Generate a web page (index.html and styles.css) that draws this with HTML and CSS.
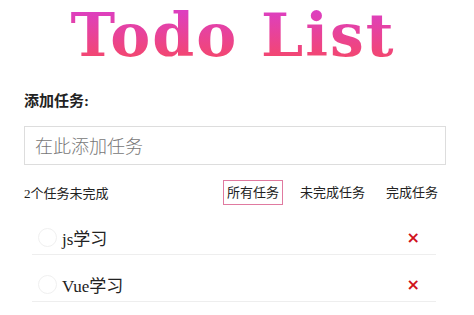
FILE: index.html
```
<!DOCTYPE html>
<html>
<head>
<meta charset="utf-8">
<link rel="stylesheet" href="styles.css">
</head>
<body>
<div class="app">
  <h1 class="title">Todo List</h1>
  <div class="label">添加任务:</div>
  <div class="input">在此添加任务</div>
  <div class="bar">
    <span class="count">2个任务未完成</span>
    <div class="filters">
      <span class="filter active">所有任务</span>
      <span class="filter">未完成任务</span>
      <span class="filter">完成任务</span>
    </div>
  </div>
  <ul class="list">
    <li class="item"><span class="check"></span><span class="text">js学习</span><span class="del">×</span></li>
    <li class="item"><span class="check"></span><span class="text">Vue学习</span><span class="del">×</span></li>
  </ul>
</div>
</body>
</html>
```
FILE: styles.css
```
html, body { margin: 0; padding: 0; background: #fff; }
body { font-family: "Liberation Serif", "Noto Sans CJK SC", serif; color: #222; }
.app { width: 422px; margin-left: 24px; }
.title {
  margin: 0;
  height: 74px;
  text-align: center;
  font-family: "DejaVu Serif", "Liberation Serif", serif;
  font-weight: bold;
  font-size: 60px;
  letter-spacing: 2px;
  line-height: 70px;
  padding-right: 4px;
  background: linear-gradient(to bottom, #dd3fc0 15%, #f4476d 80%);
  -webkit-background-clip: text;
  background-clip: text;
  color: transparent;
}
.label { font-weight: bold; font-size: 15px; line-height: 20px; margin-top: 17px; }
.input {
  margin-top: 15px;
  border: 1px solid #ddd;
  box-sizing: border-box;
  height: 39px;
  padding-left: 10px;
  font-size: 18px;
  line-height: 37px;
  color: #777;
  font-family: "Noto Sans CJK SC", serif;
  font-weight: 300;
}
.bar { display: flex; justify-content: space-between; align-items: center; margin-top: 14px; height: 26px; }
.count { font-size: 13px; }
.filters { display: flex; gap: 13px; margin-right: 4px; }
.filter { font-size: 13px; padding: 3px 3px; border: 1px solid transparent; line-height: 17px; }
.filter.active { border-color: #e07aa0; }
.list { list-style: none; margin: 3px 0 0 8px; padding: 0; width: 404px; }
.item { display: flex; align-items: center; box-sizing: border-box; height: 47px; padding-top: 12px; border-bottom: 1px solid #eee; }
.check { width: 17px; height: 17px; border: 1px solid #f0f0f0; border-radius: 50%; margin-left: 6px; margin-right: 5px; }
.text { flex: 1; font-size: 17px; }
.del { color: #d0101a; font-family: "DejaVu Sans", sans-serif; font-weight: bold; font-size: 16px; margin-right: 16px; }
```
